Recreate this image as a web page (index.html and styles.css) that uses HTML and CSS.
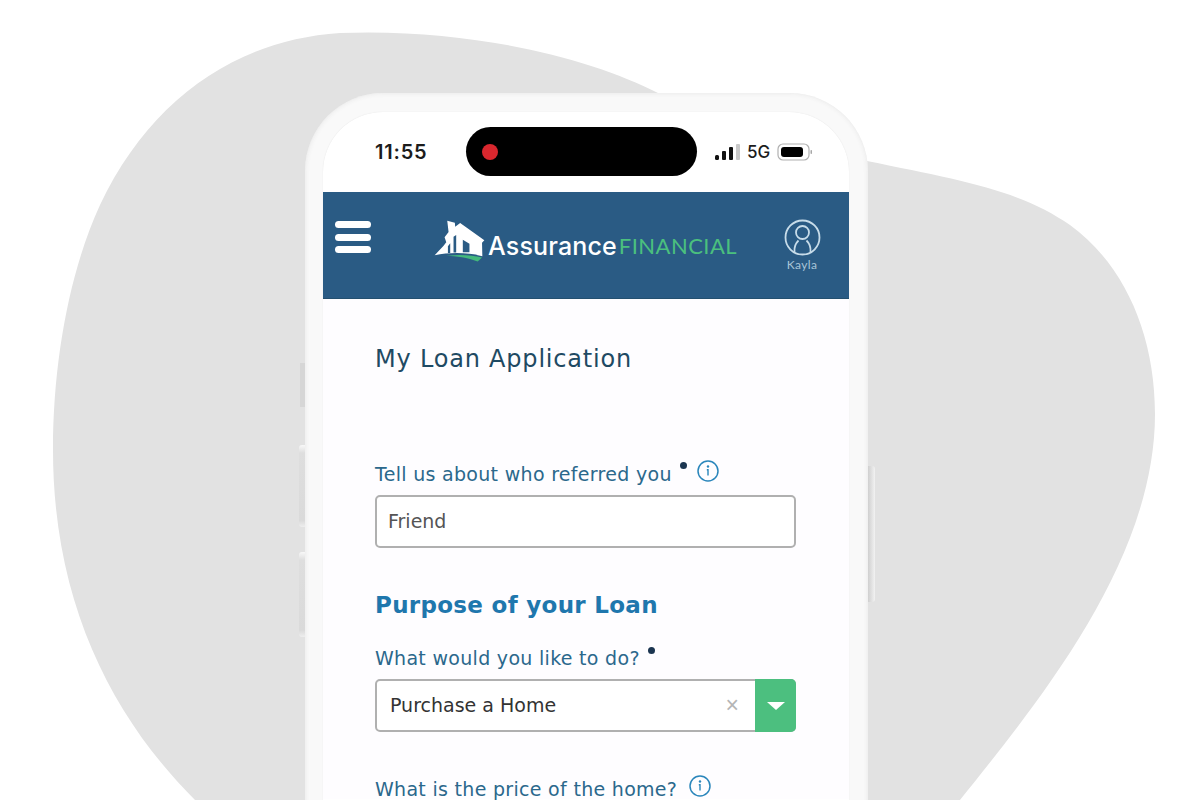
FILE: index.html
```html
<!DOCTYPE html>
<html lang="en">
<head>
<meta charset="utf-8">
<title>My Loan Application</title>
<link rel="stylesheet" href="styles.css">
</head>
<body>
<main class="stage">
  <svg class="blob" viewBox="0 0 1200 800" aria-hidden="true">
    <path d="M340 33C235 40 150 100 100 205C70 270 53 360 53 450C53 600 110 715 195 800L260 845L900 860L960 800C1040 700 1155 560 1155 414C1155 335 1125 265 1070 225C1020 190 960 180 867 161C800 148 720 125 658 93C590 58 470 28 340 33Z"/>
  </svg>
  <div class="phone">
    <span class="btn btn-mute"></span>
    <span class="btn btn-up"></span>
    <span class="btn btn-down"></span>
    <span class="btn btn-power"></span>
    <div class="screen">
      <div class="status">
        <span class="time">11:55</span>
        <div class="island"><span class="rec"></span></div>
        <svg class="signal" width="25" height="17" viewBox="0 0 25 17">
          <rect x="0" y="12" width="4" height="5" rx="1.500" fill="#111"/>
          <rect x="7" y="8" width="4" height="9" rx="1" fill="#111"/>
          <rect x="14" y="4" width="4" height="13" rx="1" fill="#111"/>
          <rect x="21" y="1" width="4" height="16" rx="1" fill="#c9c9c9"/>
        </svg>
        <span class="net">5G</span>
        <svg class="battery" width="36" height="18" viewBox="0 0 36 18">
          <rect x="1" y="1" width="31" height="16" rx="5" fill="#fff" stroke="#b0b0b0" stroke-width="1.200"/>
          <rect x="4" y="4" width="22" height="10" rx="3" fill="#000"/>
          <rect x="33.500" y="7" width="1.500" height="4" rx=".7" fill="#a8a8a8"/>
        </svg>
      </div>
      <header class="topbar">
        <div class="burger"><span></span><span></span><span></span></div>
        <div class="logo">
          <svg class="house" width="53" height="45" viewBox="400 385 160 135">
            <path fill="#fff" d="M405 497L432 468L440 458L435 443L447 427L443 393L466 399L467 411L482 400L555 452L548 459L549 500C505 488 450 488 405 497Z"/>
            <path fill="#2a5b84" d="M462 441L470 436L470 489L462 489ZM490 450L510 462L510 488L490 488ZM445 470L452 461L452 490L445 490Z"/>
            <path fill="#43b87c" d="M440 499C480 493 520 497 548 504L535 516C505 504 470 499 440 499Z"/>
          </svg>
          <span class="brand">Assurance</span><span class="brand-sub">FINANCIAL</span>
        </div>
        <div class="user">
          <svg width="37" height="37" viewBox="0 0 37 37" fill="none" stroke="#c7dce9" stroke-width="1.800">
            <circle cx="18.500" cy="18.500" r="17"/>
            <circle cx="18.500" cy="13.500" r="6.500"/>
            <path d="M10.500 33C10 28 11 25 14.500 21.500M26.500 33C27 28 26 25 22.500 21.500"/>
          </svg>
          <span class="user-name">Kayla</span>
        </div>
      </header>
      <section class="content">
        <h1 class="title">My Loan Application</h1>
        <div class="label-row first">
          <span class="label">Tell us about who referred you</span>
          <span class="req req-a"></span>
          <svg class="info info-a" width="22" height="22" viewBox="0 0 22 22"><circle cx="11" cy="11" r="10" fill="none" stroke="#2a86bb" stroke-width="1.500"/><circle cx="11" cy="6.500" r="1.200" fill="#2a86bb"/><path d="M9.800 9.700H11V15.500" fill="none" stroke="#2a86bb" stroke-width="1.400"/></svg>
        </div>
        <div class="field"><span class="value">Friend</span></div>
        <h2 class="section">Purpose of your Loan</h2>
        <div class="label-row second">
          <span class="label">What would you like to do?</span>
          <span class="req req-b"></span>
        </div>
        <div class="select">
          <span class="select-value">Purchase a Home</span>
          <span class="clear">×</span>
          <span class="caret-box"><span class="caret"></span></span>
        </div>
        <div class="label-row third">
          <span class="label">What is the price of the home?</span>
          <svg class="info" width="22" height="22" viewBox="0 0 22 22"><circle cx="11" cy="11" r="10" fill="none" stroke="#2a86bb" stroke-width="1.500"/><circle cx="11" cy="6.500" r="1.200" fill="#2a86bb"/><path d="M9.800 9.700H11V15.500" fill="none" stroke="#2a86bb" stroke-width="1.400"/></svg>
        </div>
      </section>
    </div>
  </div>
</main>
</body>
</html>
```

FILE: styles.css
```css
* { box-sizing: border-box; margin: 0; padding: 0; }
html, body { width: 1200px; height: 800px; overflow: hidden; background: #fff; }
body { font-family: "DejaVu Sans", Verdana, sans-serif; }

.stage { position: relative; width: 1200px; height: 800px; overflow: hidden; padding: 93px 0 0 305px; }
.blob { position: absolute; left: 0; top: 0; width: 1200px; height: 800px; fill: #e2e2e2; }

.phone {
  position: relative;
  width: 563px;
  height: 800px;
  padding: 19px 19px 0 18px;
  border-radius: 78px 78px 0 0;
  background: #f9f9f9;
  box-shadow: inset 0 0 5px #e6e6e6;
}
.btn { position: absolute; left: -6px; width: 6px; border-radius: 3px 0 0 3px; background: linear-gradient(#f8f8f8, #dedede 8px, #dadada 92%, #eee); }
.btn-mute { left: -5px; top: 270px; width: 5px; height: 44px; border-radius: 0; background: #d6d6d6; }
.btn-up { top: 352px; height: 82px; }
.btn-down { top: 459px; height: 85px; }
.btn-power { left: auto; right: -7px; top: 373px; width: 7px; height: 136px; border-radius: 0 3px 3px 0; background: linear-gradient(90deg, #cfcfcf, #f2f2f2); }

.screen { position: relative; height: 781px; border-radius: 60px 60px 0 0; background: #fff; overflow: hidden; box-shadow: 0 0 1px #ddd; }

.status { display: flex; align-items: center; height: 80px; padding: 0 0 1px 52px; }
.time { width: 91px; font: 600 20px "Inter", sans-serif; letter-spacing: .8px; color: #1c1c1c; }
.island { width: 231px; height: 49px; border-radius: 25px; background: #000; display: flex; align-items: center; padding-left: 16px; }
.rec { width: 16px; height: 16px; border-radius: 50%; background: #d9272e; }
.signal { margin-left: 18px; }
.net { margin-left: 7px; font: 500 17px "Inter", sans-serif; color: #1c1c1c; }
.battery { margin-left: 7px; }

.topbar { position: relative; display: flex; align-items: flex-start; height: 107px; background: #2a5b84; border-bottom: 1px solid #24506f; }
.burger { display: flex; flex-direction: column; gap: 5.500px; width: 36px; margin: 29px 0 0 12px; }
.burger span { height: 7px; border-radius: 4px; background: #fff; }
.logo { display: flex; align-items: flex-end; margin: 26px 0 0 62px; width: 304px; }
.house { flex: none; }
.brand { margin-left: 2px; font: 500 25px/1 "Inter", sans-serif; color: #fff; letter-spacing: .15px; padding-bottom: 4px; }
.brand-sub { margin-left: 2px; font: 400 22px/1 "Lato", sans-serif; color: #4bc07e; letter-spacing: .45px; padding-bottom: 6px; }
.user { display: flex; flex-direction: column; align-items: center; width: 40px; margin: 27px 0 0 45px; }
.user-name { font: 400 12px/14px "Lato", sans-serif; letter-spacing: .4px; color: #a8c5d8; margin-top: 2px; }

.content { padding: 44px 53px 0 52px; background: #fefdff; height: 500px; }
.title { font-size: 24px; line-height: 32px; font-weight: 400; letter-spacing: .8px; color: #1f4a63; }
.label-row { position: relative; display: flex; align-items: center; height: 24px; }
.first { margin-top: 87px; }
.second { margin-top: 26px; }
.third { margin-top: 45px; }
.label { font-size: 19px; line-height: 24px; letter-spacing: .3px; color: #2b688c; }
.req { width: 7px; height: 7px; border-radius: 50%; background: #1b3550; margin-left: 8px; }
.req-a { margin-top: -18px; }
.req-b { margin-top: -16px; }
.info { margin: -6px 0 0 12px; }
.info-a { margin-left: 10px; }
.field { display: flex; align-items: center; height: 53px; margin-top: 9px; padding-left: 11px; border: 2px solid #b0b0b0; border-radius: 5px; background: #fff; }
.value { font-size: 19px; color: #555; padding-bottom: 2px; }
.section { margin-top: 42px; font-size: 23px; line-height: 30px; font-weight: 700; letter-spacing: .3px; color: #1f77ad; }
.select { display: flex; align-items: center; height: 53px; margin-top: 9px; padding-left: 13px; border: 2px solid #b0b0b0; border-radius: 5px; background: #fff; }
.select-value { flex: 1; font-size: 19px; color: #333; padding-bottom: 2px; }
.clear { font: 400 23px "Liberation Sans", sans-serif; color: #b5b5b5; margin-right: 16px; }
.caret-box { display: flex; align-items: center; justify-content: center; width: 41px; align-self: stretch; margin: -2px -2px -2px 0; border-radius: 0 5px 5px 0; background: #4cbf7f; }
.caret { width: 0; height: 0; border-left: 9px solid transparent; border-right: 9px solid transparent; border-top: 8px solid #fff; }
```
